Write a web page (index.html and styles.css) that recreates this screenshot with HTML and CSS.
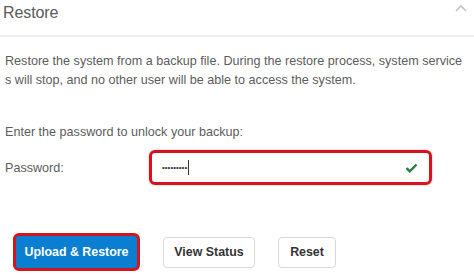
FILE: index.html
```html
<!DOCTYPE html>
<html lang="en">
<head>
  <meta charset="UTF-8">
  <title>Restore</title>
  <link rel="stylesheet" href="styles.css">
</head>
<body>
<div class="section">
  <div class="section-head">
    <span class="section-title">Restore</span>
    <svg class="chevron" width="12" height="8" viewBox="0 0 12 8"><path d="M1 7 L6 2 L11 7" fill="none" stroke="#c4c4c4" stroke-width="1.6"/></svg>
  </div>
  <p class="desc">Restore the system from a backup file. During the restore process, system service s will stop, and no other user will be able to access the system.</p>
  <p class="hint">Enter the password to unlock your backup:</p>
  <div class="field">
    <label class="field-label" for="pw">Password:</label>
    <div class="input-wrap">
      <span class="dots">•••••••••</span><span class="caret"></span>
      <svg class="check" width="13" height="10" viewBox="0 0 13 10"><path d="M1.5 5.2 L4.8 8.3 L11.5 1.5" fill="none" stroke="#2d7d3a" stroke-width="2.4"/></svg>
    </div>
  </div>
  <div class="actions">
    <button class="btn btn-primary">Upload &amp; Restore</button>
    <button class="btn btn-status">View Status</button>
    <button class="btn btn-reset">Reset</button>
  </div>
</div>
</body>
</html>
```

FILE: styles.css
```css
body{margin:0;background:#fff;font-family:"Liberation Sans",Arial,Helvetica,sans-serif;color:#555}
.section{width:474px}
.section-head{height:37px;border-bottom:2px solid #eeeeee;display:flex;justify-content:space-between;align-items:flex-start;padding:0 7px 0 3px;box-sizing:border-box}
.section-title{font-size:16px;line-height:16px;margin-top:5px;color:#5a5a5a;letter-spacing:-.1px}
.chevron{margin-top:4px}
.desc{margin:15px 0 0 5px;font-size:12.6px;line-height:18.5px;color:#5c5c5c;width:465px}
.hint{margin:35px 0 0 5px;font-size:12.6px;line-height:16px;color:#5c5c5c}
.field{display:flex;align-items:center;margin-top:10px}
.field-label{width:144px;padding-left:5px;font-size:12.6px;color:#5c5c5c}
.input-wrap{box-sizing:border-box;width:283px;height:35px;border:3px solid #d7121d;border-radius:6px;display:flex;align-items:center;padding:0 10px;box-shadow:0 0 2px rgba(200,0,0,.4)}
.dots{font-size:8px;color:#333;line-height:1}
.caret{width:1px;height:15px;background:#333;margin-left:1px}
.check{margin-left:auto;margin-right:1px}
.actions{display:flex;align-items:center;margin:48px 0 0 13px;gap:23px}
.btn{font-family:inherit;font-size:12.4px;font-weight:700;color:#333;background:#fff;border:1.5px solid #d8d8d8;border-radius:4px;height:31px;padding:0;white-space:nowrap;box-sizing:border-box;text-align:center}
.btn-primary{background:#0a7fd2;color:#fff;border:3px solid #d1161f;border-radius:6px;height:38px;width:127px}
.btn-status{width:92px}
.btn-reset{width:58px}
```
